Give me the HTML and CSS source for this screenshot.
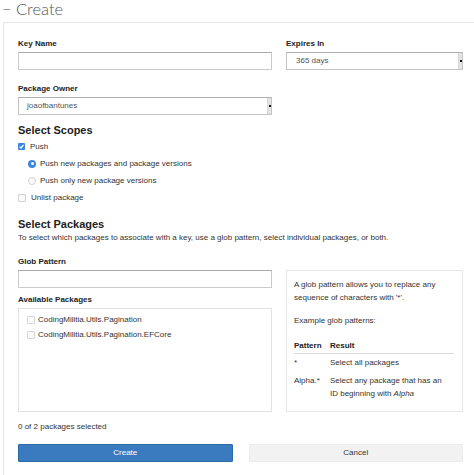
FILE: index.html
```html
<!DOCTYPE html>
<html lang="en">
<head>
<meta charset="utf-8">
<title>Create API Key</title>
<link rel="stylesheet" href="styles.css">
</head>
<body>
<h1 class="title">&minus; Create</h1>
<div class="panel">
  <form class="form">
    <div class="grid-2 row">
      <div class="field">
        <label class="label">Key Name</label>
        <div class="input"></div>
      </div>
      <div class="field">
        <label class="label">Expires In</label>
        <div class="select select-wide"><span class="select-text">365 days</span><span class="handle"><span class="handle-dot"></span></span></div>
      </div>
    </div>
    <div class="grid-2">
      <div class="field">
        <label class="label">Package Owner</label>
        <div class="select"><span class="select-text">joaofbantunes</span><span class="handle"><span class="handle-dot"></span></span></div>
      </div>
    </div>

    <h2 class="section">Select Scopes</h2>
    <div class="option"><span class="check checked"><svg viewBox="0 0 7 7" width="7" height="7"><path d="M1.6 3.6 L3 5 L5.5 2" fill="none" stroke="#fff" stroke-width="1.2"/></svg></span>Push</div>
    <div class="option sub"><span class="radio on"></span>Push new packages and package versions</div>
    <div class="option sub"><span class="radio"></span>Push only new package versions</div>
    <div class="option"><span class="check"></span>Unlist package</div>

    <h2 class="section section-packages">Select Packages</h2>
    <p class="desc">To select which packages to associate with a key, use a glob pattern, select individual packages, or both.</p>

    <div class="grid-2 globs">
      <div class="left-col">
        <div class="field">
          <label class="label">Glob Pattern</label>
          <div class="input"></div>
        </div>
        <div class="field avail">
          <label class="label">Available Packages</label>
          <div class="list">
            <div class="list-item"><span class="check small"></span>CodingMilitia.Utils.Pagination</div>
            <div class="list-item"><span class="check small"></span>CodingMilitia.Utils.Pagination.EFCore</div>
          </div>
        </div>
      </div>
      <aside class="help">
        <p class="help-p">A glob pattern allows you to replace any sequence of characters with '*'.</p>
        <p class="help-p">Example glob patterns:</p>
        <table class="glob-table">
          <thead>
            <tr><th class="c1">Pattern</th><th class="c2">Result</th></tr>
          </thead>
          <tbody>
            <tr><td class="c1">*</td><td class="c2">Select all packages</td></tr>
            <tr><td class="c1">Alpha.*</td><td class="c2"><span class="line">Select any package that has an</span><span class="line">ID beginning with <span class="em">Alpha</span></span></td></tr>
          </tbody>
        </table>
      </aside>
    </div>

    <p class="count">0 of 2 packages selected</p>

    <div class="buttons">
      <button type="button" class="btn btn-primary">Create</button>
      <button type="button" class="btn btn-default">Cancel</button>
    </div>
  </form>
</div>
</body>
</html>
```

FILE: styles.css
```css
html, body {
  margin: 0;
  padding: 0;
  background: #fff;
}

body {
  font-family: "Liberation Sans", Arial, sans-serif;
  font-size: 8px;
  color: #333;
  overflow: hidden;
}

.title {
  margin: 0 0 4px 0;
  padding: 1px 0 0 2px;
  font-family: "Lato", "Liberation Sans", sans-serif;
  font-weight: 300;
  font-size: 16.5px;
  line-height: 17px;
  color: #555;
  white-space: nowrap;
}

.panel {
  margin-left: 3px;
  border-top: 1px solid #e6e6e6;
  border-left: 1px solid #e6e6e6;
  padding: 15px 0 0 14px;
  height: 460px;
}

.form {
  width: 445px;
}

.grid-2 {
  display: grid;
  grid-template-columns: 254px 177px;
  column-gap: 14px;
}

.row {
  margin-bottom: 13px;
}

.field {
  display: flex;
  flex-direction: column;
}

.label {
  display: block;
  font-weight: bold;
  font-size: 8px;
  line-height: 11px;
  margin-bottom: 3px;
  color: #222;
}

.input {
  height: 18px;
  box-sizing: border-box;
  border: 1px solid #cbcbcb;
  border-top-color: #a9a9a9;
  background: #fff;
}

.select {
  height: 18px;
  box-sizing: border-box;
  border: 1px solid #c4c4c4;
  border-top-color: #b0b0b0;
  background: #fff;
  display: flex;
  align-items: stretch;
}

.select-text {
  flex: 1;
  padding-left: 8px;
  line-height: 16px;
  color: #555;
}

.select-wide .select-text {
  padding-left: 9px;
}

.handle {
  width: 3px;
  background: #e4e4e4;
  border-left: 1px solid #d6d6d6;
  display: flex;
  align-items: center;
  justify-content: center;
}

.handle-dot {
  width: 2px;
  height: 2px;
  background: #111;
}

.section {
  margin: 9px 0 1px 0;
  font-size: 11px;
  line-height: 13px;
  font-weight: bold;
  color: #222;
}

.section-packages {
  margin-top: 12px;
}

.option {
  display: flex;
  align-items: center;
  line-height: 17px;
  height: 17px;
  color: #333;
}

.option.sub {
  padding-left: 10px;
}

.check {
  width: 6px;
  height: 6px;
  border: 1px solid #d2d2d2;
  border-radius: 1px;
  background: #fafafa;
  margin-right: 5px;
  display: inline-flex;
  align-items: center;
  justify-content: center;
  flex: none;
}

.check.checked {
  width: 7px;
  height: 7px;
  border: none;
  background: #3b86e0;
}

.check.checked svg {
  display: block;
}

.check.small {
  margin-right: 3px;
  border-color: #d6d6d6;
}

.radio {
  width: 6px;
  height: 6px;
  border: 1px solid #d2d2d2;
  border-radius: 50%;
  background: #fafafa;
  margin-right: 4px;
  flex: none;
  display: inline-flex;
  align-items: center;
  justify-content: center;
}

.radio.on {
  width: 8px;
  height: 8px;
  border: none;
  background: #3b86e0;
}

.radio.on::after {
  content: "";
  width: 3px;
  height: 3px;
  border-radius: 50%;
  background: #fff;
}

.desc {
  margin: 2px 0 0 0;
  line-height: 10px;
  color: #333;
  white-space: nowrap;
}

.globs {
  margin-top: 13px;
}

.left-col {
  display: flex;
  flex-direction: column;
}

.avail {
  margin-top: 6px;
}

.list {
  height: 104px;
  box-sizing: border-box;
  border: 1px solid #e2e2e2;
  padding: 3px 8px;
}

.list-item {
  display: flex;
  align-items: center;
  line-height: 15px;
  height: 15px;
  color: #333;
}

.help {
  margin-top: 14px;
  border: 1px solid #e6e6e6;
  padding: 7px 8px 0 7px;
  box-sizing: border-box;
}

.help-p {
  margin: 0 0 10px 0;
  line-height: 13px;
  color: #333;
}

.glob-table {
  width: 100%;
  border-collapse: collapse;
  margin-top: -1px;
  font-size: 8px;
}

.glob-table th,
.glob-table td {
  text-align: left;
  vertical-align: top;
  padding: 2.5px 0 2.5px 0;
  line-height: 13px;
}

.glob-table th {
  padding-bottom: 1px;
  border-bottom: 1px solid #dcdcdc;
  font-weight: bold;
  color: #222;
}

.glob-table .c1 {
  width: 36px;
}

.glob-table .c2 {
  padding-right: 6px;
}

.line {
  display: block;
  white-space: nowrap;
}

.em {
  font-style: italic;
}

.count {
  margin: 9px 0 0 0;
  line-height: 11px;
  color: #333;
}

.buttons {
  margin-top: 12px;
  display: grid;
  grid-template-columns: 1fr 1fr;
  column-gap: 16px;
}

.btn {
  height: 18px;
  box-sizing: border-box;
  font-family: "Liberation Sans", Arial, sans-serif;
  font-size: 8px;
  line-height: 16px;
  padding: 0;
  border-radius: 1px;
  cursor: pointer;
}

.btn-primary {
  background: #3a7bbf;
  border: 1px solid #2f6aa8;
  color: #fff;
}

.btn-default {
  background: #f2f2f2;
  border: 1px solid #ececec;
  color: #333;
}
```
